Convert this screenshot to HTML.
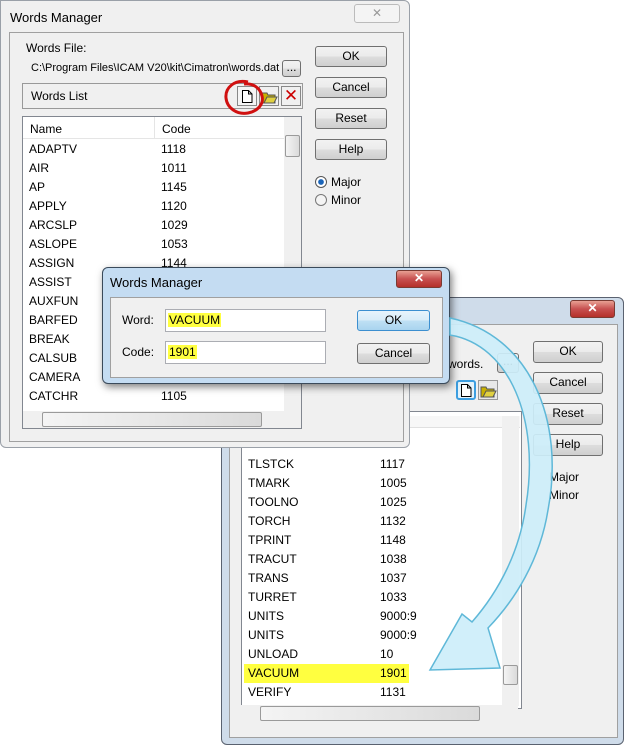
<!DOCTYPE html><html><head><style>
*{box-sizing:border-box;margin:0;padding:0}
body{width:626px;height:745px;background:#fff;position:relative;overflow:hidden;font-family:"Liberation Sans",sans-serif;font-size:12px;color:#000}
.a{position:absolute}
.win{position:absolute;background:#f0f0f0;border:1px solid #8a8f98;border-radius:6px}
.client{position:absolute;border:1px solid #a0a0a0;background:#f0f0f0}
.btn{position:absolute;border:1px solid #707070;border-radius:3px;background:linear-gradient(#f2f2f2,#ebebeb 50%,#dddddd 51%,#cfcfcf);text-align:center;font-size:12px;line-height:19px}
.list{position:absolute;background:#fff;border:1px solid #828790}
.row{position:absolute;height:19px;line-height:19px}
.close{position:absolute;border:1px solid #7a3a32;border-radius:3px;background:linear-gradient(#e8a093,#c75050 50%,#b5302a);color:#fff;font-weight:bold;text-align:center;font-size:12px;line-height:15px}
.vs{position:absolute;background:#f0f0f0}
.thumb{position:absolute;border:1px solid #9a9a9a;border-radius:2px;background:linear-gradient(90deg,#f4f4f4,#dadada)}
.inp{position:absolute;background:#fff;border:1px solid #abadb3}
.hl{background:#ffff40}
</style></head><body>

<!-- window 3 (back) -->
<div class="win" style="left:221px;top:297px;width:403px;height:448px;background:#cfdcea;border-color:#5a6270">
 <div class="close" style="left:348px;top:2px;width:45px;height:18px">✕</div>
 <div class="client" style="left:7px;top:26px;width:389px;height:414px"></div>
 <div class="btn" style="left:311px;top:43px;width:70px;height:22px">OK</div>
 <div class="btn" style="left:311px;top:74px;width:70px;height:22px">Cancel</div>
 <div class="btn" style="left:311px;top:105px;width:70px;height:22px">Reset</div>
 <div class="btn" style="left:311px;top:136px;width:70px;height:22px">Help</div>
 <div class="a" style="left:327px;top:172px">Major</div>
 <div class="a" style="left:327px;top:190px">Minor</div>
 <div class="a" style="left:226px;top:59px">words.</div>
 <div class="btn" style="left:275px;top:55px;width:22px;height:20px;line-height:14px">...</div>
 <div class="a" style="left:234px;top:82px;width:20px;height:20px;border:2px solid #3c9ee0;border-radius:3px;background:#e5f3fb"></div>
 <svg class="a" style="left:239px;top:86px" width="11" height="13"><path d="M.5 .5h6l3.5 3.5v8.5h-9.5z M6.5 .5v3.5h3.5" fill="#fff" stroke="#000"/></svg>
 <div class="a" style="left:256px;top:82px;width:20px;height:20px;border:1px solid #999;background:#e8e8e8"></div>
 <svg class="a" style="left:258px;top:85px" width="17" height="15"><path d="M1 4h5l1 2h7v8H1z" fill="#c8b000" stroke="#555"/><path d="M3 14l3-6h10l-3 6z" fill="#e0d040" stroke="#555"/></svg>
 <div class="list" style="left:19px;top:113px;width:281px;height:298px"></div>
</div>
<div class="a" style="left:240px;top:416px;width:280px;height:12px;background:#f7f7f7;border-bottom:1px solid #e0e0e0"></div>
<div class="row" style="left:248px;top:455px">TLSTCK</div><div class="row" style="left:380px;top:455px">1117</div>
<div class="row" style="left:248px;top:474px">TMARK</div><div class="row" style="left:380px;top:474px">1005</div>
<div class="row" style="left:248px;top:493px">TOOLNO</div><div class="row" style="left:380px;top:493px">1025</div>
<div class="row" style="left:248px;top:512px">TORCH</div><div class="row" style="left:380px;top:512px">1132</div>
<div class="row" style="left:248px;top:531px">TPRINT</div><div class="row" style="left:380px;top:531px">1148</div>
<div class="row" style="left:248px;top:550px">TRACUT</div><div class="row" style="left:380px;top:550px">1038</div>
<div class="row" style="left:248px;top:569px">TRANS</div><div class="row" style="left:380px;top:569px">1037</div>
<div class="row" style="left:248px;top:588px">TURRET</div><div class="row" style="left:380px;top:588px">1033</div>
<div class="row" style="left:248px;top:607px">UNITS</div><div class="row" style="left:380px;top:607px">9000:9</div>
<div class="row" style="left:248px;top:626px">UNITS</div><div class="row" style="left:380px;top:626px">9000:9</div>
<div class="row" style="left:248px;top:645px">UNLOAD</div><div class="row" style="left:380px;top:645px">10</div>
<div class="row hl" style="left:244px;top:664px;width:165px;padding-left:4px">VACUUM<span style="position:absolute;left:136px">1901</span></div>
<div class="row" style="left:248px;top:683px">VERIFY</div><div class="row" style="left:380px;top:683px">1131</div>
<div class="vs" style="left:502px;top:416px;width:17px;height:290px"></div>
<div class="thumb" style="left:503px;top:665px;width:15px;height:20px"></div>
<div class="vs" style="left:241px;top:705px;width:277px;height:17px"></div>
<div class="thumb" style="left:260px;top:706px;width:220px;height:15px"></div>

<!-- window 1 -->
<div class="win" style="left:0;top:0;width:410px;height:448px;border-color:#9aa0a8;border-radius:0 6px 6px 6px">
 <div class="a" style="left:9px;top:9px;font-size:13px">Words Manager</div>
 <div class="a" style="left:353px;top:3px;width:46px;height:19px;border:1px solid #bbb;border-radius:3px;background:#f4f4f4;color:#999;text-align:center;line-height:17px">✕</div>
 <div class="client" style="left:8px;top:31px;width:395px;height:410px"></div>
 <div class="a" style="left:25px;top:40px">Words File:</div>
 <div class="a" style="left:30px;top:61px;font-size:11px">C:\Program Files\ICAM V20\kit\Cimatron\words.dat</div>
 <div class="btn" style="left:281px;top:59px;width:19px;height:17px;line-height:12px">...</div>
 <div class="a" style="left:21px;top:82px;width:281px;height:26px;border:1px solid #999"></div>
 <div class="a" style="left:30px;top:88px">Words List</div>
 <div class="a" style="left:236px;top:85px;width:20px;height:20px;border:1px solid #888;background:#f5f5f5"></div>
 <svg class="a" style="left:241px;top:89px" width="11" height="13"><path d="M.5 .5h6l3.5 3.5v8.5h-9.5z M6.5 .5v3.5h3.5" fill="#fff" stroke="#000"/></svg>
 <div class="a" style="left:258px;top:85px;width:20px;height:20px;border:1px solid #888;background:#f0f0f0"></div>
 <svg class="a" style="left:260px;top:88px" width="17" height="15"><path d="M1 4h5l1 2h7v8H1z" fill="#c8b000" stroke="#555"/><path d="M3 14l3-6h10l-3 6z" fill="#e0d040" stroke="#555"/></svg>
 <div class="a" style="left:280px;top:85px;width:20px;height:20px;border:1px solid #888;background:#f0f0f0;color:#c00;font-size:17px;text-align:center;line-height:18px">✕</div>
 <div class="list" style="left:21px;top:115px;width:280px;height:313px"></div>
 <div class="a" style="left:22px;top:116px;width:262px;height:22px;background:#fff;border-bottom:1px solid #e5e5e5"></div>
 <div class="a" style="left:153px;top:116px;width:1px;height:22px;background:#e5e5e5"></div>
 <div class="a" style="left:29px;top:121px">Name</div><div class="a" style="left:161px;top:121px">Code</div>
 <div class="vs" style="left:283px;top:116px;width:17px;height:294px"></div>
 <div class="thumb" style="left:284px;top:134px;width:15px;height:22px"></div>
 <div class="vs" style="left:22px;top:410px;width:278px;height:17px"></div>
 <div class="thumb" style="left:41px;top:411px;width:220px;height:15px"></div>
 <div class="btn" style="left:314px;top:45px;width:72px;height:21px">OK</div>
 <div class="btn" style="left:314px;top:76px;width:72px;height:21px">Cancel</div>
 <div class="btn" style="left:314px;top:107px;width:72px;height:21px">Reset</div>
 <div class="btn" style="left:314px;top:138px;width:72px;height:21px">Help</div>
 <div class="a" style="left:314px;top:175px;width:12px;height:12px;border:1px solid #555;border-radius:50%;background:radial-gradient(#1a64b8 35%,#fff 45%)"></div>
 <div class="a" style="left:330px;top:174px">Major</div>
 <div class="a" style="left:314px;top:193px;width:12px;height:12px;border:1px solid #777;border-radius:50%;background:#f4f4f4"></div>
 <div class="a" style="left:330px;top:192px">Minor</div>
</div>
<div class="row" style="left:29px;top:140px">ADAPTV</div><div class="row" style="left:161px;top:140px">1118</div>
<div class="row" style="left:29px;top:159px">AIR</div><div class="row" style="left:161px;top:159px">1011</div>
<div class="row" style="left:29px;top:178px">AP</div><div class="row" style="left:161px;top:178px">1145</div>
<div class="row" style="left:29px;top:197px">APPLY</div><div class="row" style="left:161px;top:197px">1120</div>
<div class="row" style="left:29px;top:216px">ARCSLP</div><div class="row" style="left:161px;top:216px">1029</div>
<div class="row" style="left:29px;top:235px">ASLOPE</div><div class="row" style="left:161px;top:235px">1053</div>
<div class="row" style="left:29px;top:254px">ASSIGN</div><div class="row" style="left:161px;top:254px">1144</div>
<div class="row" style="left:29px;top:273px">ASSIST</div>
<div class="row" style="left:29px;top:292px">AUXFUN</div>
<div class="row" style="left:29px;top:311px">BARFED</div>
<div class="row" style="left:29px;top:330px">BREAK</div>
<div class="row" style="left:29px;top:349px">CALSUB</div>
<div class="row" style="left:29px;top:368px">CAMERA</div>
<div class="row" style="left:29px;top:387px">CATCHR</div><div class="row" style="left:161px;top:387px">1105</div>
<!-- red circle -->
<svg class="a" style="left:222px;top:78px" width="46" height="40"><path d="M26 4C12 1 3 10 4 20c1 10 11 17 22 15c10-2 16-9 14-17C38 9 30 5 22 6" fill="none" stroke="#d01010" stroke-width="3"/></svg>

<!-- window 2 -->
<div class="win" style="left:102px;top:267px;width:348px;height:117px;background:#c4dcf2;border-color:#3a4a5a;box-shadow:2px 3px 8px rgba(0,0,0,.5)">
 <div class="a" style="left:7px;top:7px;font-size:13px">Words Manager</div>
 <div class="close" style="left:293px;top:2px;width:46px;height:18px">✕</div>
 <div class="client" style="left:7px;top:29px;width:333px;height:81px"></div>
 <div class="a" style="left:19px;top:45px">Word:</div>
 <div class="a" style="left:19px;top:77px">Code:</div>
 <div class="inp" style="left:62px;top:41px;width:161px;height:23px"><span class="hl" style="position:absolute;left:2px;top:3px;padding:0 1px">VACUUM</span></div>
 <div class="inp" style="left:62px;top:73px;width:161px;height:23px"><span class="hl" style="position:absolute;left:2px;top:3px;padding:0 1px">1901</span></div>
 <div class="btn" style="left:254px;top:42px;width:73px;height:21px;border-color:#3c8fd0;background:linear-gradient(#e8f4fc,#d8ecf8 50%,#bfe0f4 51%,#a9d4ef)">OK</div>
 <div class="btn" style="left:254px;top:75px;width:73px;height:21px">Cancel</div>
</div>

<!-- arrow -->
<svg class="a" style="left:0;top:0" width="626" height="745">
 <path d="M450 318C530 335 565 420 548 510C540 560 515 600 488 628L500 668L430 670L462 614L472 622C500 590 520 550 526 505C540 420 510 345 450 335Z" fill="#cdeefa" fill-opacity=".92" stroke="#5fb8d8" stroke-width="1.5"/>
</svg>
</body></html>
